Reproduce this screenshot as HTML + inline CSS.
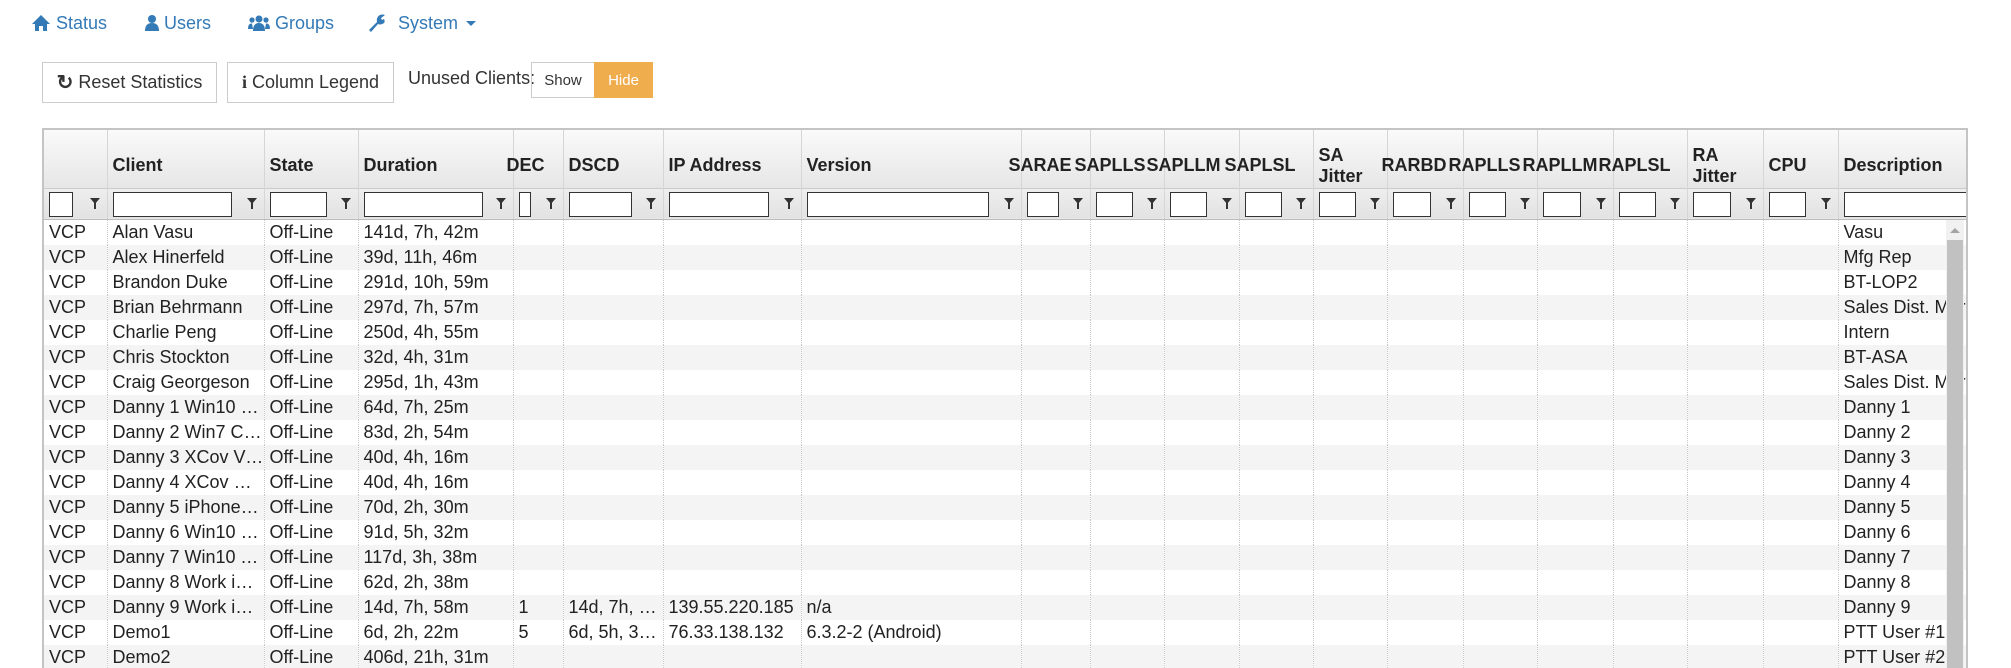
<!DOCTYPE html>
<html><head><meta charset="utf-8">
<style>
*{box-sizing:border-box;margin:0;padding:0}
html,body{width:2011px;height:668px;overflow:hidden}
body{background:#fff;font-family:"Liberation Sans",Arial,sans-serif;color:#222;position:relative}
.nav{position:absolute;top:11px;font-size:18px;color:#337ab7;display:flex;align-items:center;gap:5px;height:24px}
.btn{position:absolute;top:62px;height:41px;border:1px solid #ccc;background:#fff;font-size:18px;display:flex;align-items:center;justify-content:center;gap:5px;color:#333}
table{position:absolute;left:42px;top:128px;width:1924px;border-collapse:collapse;table-layout:fixed;border:2px solid #c4c4c4;border-bottom:none;font-size:18px}
th{height:59px;background:linear-gradient(#fafafa,#e6e6e6);border-left:1px solid #d6d6d6;text-align:left;vertical-align:bottom;padding:0 0 12px 5px;font-weight:bold;white-space:nowrap;overflow:visible;line-height:21px}
tr.f td{height:31px;background:linear-gradient(#eee,#e2e2e2);border-left:1px solid #d6d6d6;border-top:1px solid #ccc;border-bottom:1px solid #bbb;position:relative;padding:0}
tr.f td i{position:absolute;left:5px;top:3px;height:25px;background:#fff;border:1px solid #333}
tr.f td b{position:absolute;right:7px;top:9px;width:0;height:0;border-left:5px solid transparent;border-right:5px solid transparent;border-top:6px solid #333}
tr.f td b:after{content:"";position:absolute;left:-1px;top:-1px;width:2px;height:6px;background:#333}
td{height:25px;padding:0 0 0 5px;white-space:nowrap;overflow:hidden;text-overflow:ellipsis;border-left:1px dotted #c8c8c8;line-height:25px}
tbody tr:nth-child(even) td{background:#f4f4f4}
</style></head><body>
<div class="nav" style="left:31px"><svg width="20" height="18" viewBox="0 0 20 18"><path d="M10 1 L19 10 L16 10 L16 17 L12 17 L12 12 L8 12 L8 17 L4 17 L4 10 L1 10 Z" fill="#337ab7"/></svg>Status</div>
<div class="nav" style="left:145px"><svg width="14" height="18" viewBox="0 0 14 18"><circle cx="7" cy="5" r="4" fill="#337ab7"/><path d="M0 17 Q0 9 7 9 Q14 9 14 17Z" fill="#337ab7"/></svg>Users</div>
<div class="nav" style="left:248px"><svg width="22" height="18" viewBox="0 0 22 18"><circle cx="11" cy="5" r="3.5" fill="#337ab7"/><circle cx="4" cy="6" r="2.6" fill="#337ab7"/><circle cx="18" cy="6" r="2.6" fill="#337ab7"/><path d="M5 17 Q5 9 11 9 Q17 9 17 17Z M0 15 Q0 9 4 9.5 L5 15Z M22 15 Q22 9 18 9.5 L17 15Z" fill="#337ab7"/></svg>Groups</div>
<div class="nav" style="left:368px;gap:12px"><svg width="18" height="18" viewBox="0 0 18 18"><path d="M1 16 L9 8 Q8 3 12 1 Q15 0 17 1 L13 4 L14 6 L16 5 Q18 9 14 10 Q12 11 10 10 L3 18 Z" fill="#337ab7"/></svg>System<span style="display:inline-block;width:0;height:0;border-left:5px solid transparent;border-right:5px solid transparent;border-top:5px solid #337ab7;margin-left:-4px"></span></div>

<div class="btn" style="left:42px;width:175px"><span style="font-size:20px;font-weight:bold">&#x21bb;</span>Reset Statistics</div>
<div class="btn" style="left:227px;width:167px"><span style="font-family:'Liberation Serif',serif;font-weight:bold">i</span>Column Legend</div>
<div style="position:absolute;left:408px;top:68px;font-size:18px;color:#333">Unused Clients:</div>
<div style="position:absolute;left:531px;top:62px;width:64px;height:36px;border:1px solid #ccc;font-size:15px;display:flex;align-items:center;justify-content:center;color:#333">Show</div>
<div style="position:absolute;left:594px;top:62px;width:59px;height:36px;background:#f0ad4e;font-size:15px;display:flex;align-items:center;justify-content:center;color:#fff">Hide</div>

<table>
<colgroup><col style="width:64px"><col style="width:157px"><col style="width:94px"><col style="width:155px"><col style="width:50px"><col style="width:100px"><col style="width:138px"><col style="width:220px"><col style="width:69px"><col style="width:74px"><col style="width:75px"><col style="width:74px"><col style="width:74px"><col style="width:76px"><col style="width:74px"><col style="width:76px"><col style="width:74px"><col style="width:76px"><col style="width:75px"><col style="width:129px"></colgroup>
<thead><tr><th></th><th>Client</th><th>State</th><th>Duration</th><th><span style="position:relative;left:-12px">DEC</span></th><th>DSCD</th><th>IP Address</th><th>Version</th><th><span style="position:relative;left:-18px">SARAE</span></th><th><span style="position:relative;left:-21px">SAPLLS</span></th><th><span style="position:relative;left:-23px">SAPLLM</span></th><th><span style="position:relative;left:-20px">SAPLSL</span></th><th style="padding-bottom:1px">SA<br>Jitter</th><th><span style="position:relative;left:-11px">RARBD</span></th><th><span style="position:relative;left:-20px">RAPLLS</span></th><th><span style="position:relative;left:-20px">RAPLLM</span></th><th><span style="position:relative;left:-20px">RAPLSL</span></th><th style="padding-bottom:1px">RA<br>Jitter</th><th>CPU</th><th>Description</th></tr>
<tr class="f"><td><i style="width:24px"></i><b></b></td><td><i style="width:119px"></i><b></b></td><td><i style="width:57px"></i><b></b></td><td><i style="width:119px"></i><b></b></td><td><i style="width:12px"></i><b></b></td><td><i style="width:63px"></i><b></b></td><td><i style="width:100px"></i><b></b></td><td><i style="width:182px"></i><b></b></td><td><i style="width:32px"></i><b></b></td><td><i style="width:37px"></i><b></b></td><td><i style="width:37px"></i><b></b></td><td><i style="width:37px"></i><b></b></td><td><i style="width:37px"></i><b></b></td><td><i style="width:38px"></i><b></b></td><td><i style="width:37px"></i><b></b></td><td><i style="width:38px"></i><b></b></td><td><i style="width:37px"></i><b></b></td><td><i style="width:38px"></i><b></b></td><td><i style="width:37px"></i><b></b></td><td><i style="width:130px"></i></td></tr></thead>
<tbody>
<tr><td>VCP</td><td>Alan Vasu</td><td>Off-Line</td><td>141d, 7h, 42m</td><td></td><td></td><td></td><td></td><td></td><td></td><td></td><td></td><td></td><td></td><td></td><td></td><td></td><td></td><td></td><td>Vasu</td></tr>
<tr><td>VCP</td><td>Alex Hinerfeld</td><td>Off-Line</td><td>39d, 11h, 46m</td><td></td><td></td><td></td><td></td><td></td><td></td><td></td><td></td><td></td><td></td><td></td><td></td><td></td><td></td><td></td><td>Mfg Rep</td></tr>
<tr><td>VCP</td><td>Brandon Duke</td><td>Off-Line</td><td>291d, 10h, 59m</td><td></td><td></td><td></td><td></td><td></td><td></td><td></td><td></td><td></td><td></td><td></td><td></td><td></td><td></td><td></td><td>BT-LOP2</td></tr>
<tr><td>VCP</td><td>Brian Behrmann</td><td>Off-Line</td><td>297d, 7h, 57m</td><td></td><td></td><td></td><td></td><td></td><td></td><td></td><td></td><td></td><td></td><td></td><td></td><td></td><td></td><td></td><td>Sales Dist. Mgr</td></tr>
<tr><td>VCP</td><td>Charlie Peng</td><td>Off-Line</td><td>250d, 4h, 55m</td><td></td><td></td><td></td><td></td><td></td><td></td><td></td><td></td><td></td><td></td><td></td><td></td><td></td><td></td><td></td><td>Intern</td></tr>
<tr><td>VCP</td><td>Chris Stockton</td><td>Off-Line</td><td>32d, 4h, 31m</td><td></td><td></td><td></td><td></td><td></td><td></td><td></td><td></td><td></td><td></td><td></td><td></td><td></td><td></td><td></td><td>BT-ASA</td></tr>
<tr><td>VCP</td><td>Craig Georgeson</td><td>Off-Line</td><td>295d, 1h, 43m</td><td></td><td></td><td></td><td></td><td></td><td></td><td></td><td></td><td></td><td></td><td></td><td></td><td></td><td></td><td></td><td>Sales Dist. Mgr</td></tr>
<tr><td>VCP</td><td>Danny 1 Win10 Laptop</td><td>Off-Line</td><td>64d, 7h, 25m</td><td></td><td></td><td></td><td></td><td></td><td></td><td></td><td></td><td></td><td></td><td></td><td></td><td></td><td></td><td></td><td>Danny 1</td></tr>
<tr><td>VCP</td><td>Danny 2 Win7 Client</td><td>Off-Line</td><td>83d, 2h, 54m</td><td></td><td></td><td></td><td></td><td></td><td></td><td></td><td></td><td></td><td></td><td></td><td></td><td></td><td></td><td></td><td>Danny 2</td></tr>
<tr><td>VCP</td><td>Danny 3 XCov Virtual</td><td>Off-Line</td><td>40d, 4h, 16m</td><td></td><td></td><td></td><td></td><td></td><td></td><td></td><td></td><td></td><td></td><td></td><td></td><td></td><td></td><td></td><td>Danny 3</td></tr>
<tr><td>VCP</td><td>Danny 4 XCov Client</td><td>Off-Line</td><td>40d, 4h, 16m</td><td></td><td></td><td></td><td></td><td></td><td></td><td></td><td></td><td></td><td></td><td></td><td></td><td></td><td></td><td></td><td>Danny 4</td></tr>
<tr><td>VCP</td><td>Danny 5 iPhone 6s Plus</td><td>Off-Line</td><td>70d, 2h, 30m</td><td></td><td></td><td></td><td></td><td></td><td></td><td></td><td></td><td></td><td></td><td></td><td></td><td></td><td></td><td></td><td>Danny 5</td></tr>
<tr><td>VCP</td><td>Danny 6 Win10 Desktop</td><td>Off-Line</td><td>91d, 5h, 32m</td><td></td><td></td><td></td><td></td><td></td><td></td><td></td><td></td><td></td><td></td><td></td><td></td><td></td><td></td><td></td><td>Danny 6</td></tr>
<tr><td>VCP</td><td>Danny 7 Win10 Tablet</td><td>Off-Line</td><td>117d, 3h, 38m</td><td></td><td></td><td></td><td></td><td></td><td></td><td></td><td></td><td></td><td></td><td></td><td></td><td></td><td></td><td></td><td>Danny 7</td></tr>
<tr><td>VCP</td><td>Danny 8 Work iPhone</td><td>Off-Line</td><td>62d, 2h, 38m</td><td></td><td></td><td></td><td></td><td></td><td></td><td></td><td></td><td></td><td></td><td></td><td></td><td></td><td></td><td></td><td>Danny 8</td></tr>
<tr><td>VCP</td><td>Danny 9 Work iPad</td><td>Off-Line</td><td>14d, 7h, 58m</td><td>1</td><td>14d, 7h, 58m</td><td>139.55.220.185</td><td>n/a</td><td></td><td></td><td></td><td></td><td></td><td></td><td></td><td></td><td></td><td></td><td></td><td>Danny 9</td></tr>
<tr><td>VCP</td><td>Demo1</td><td>Off-Line</td><td>6d, 2h, 22m</td><td>5</td><td>6d, 5h, 30m</td><td>76.33.138.132</td><td>6.3.2-2 (Android)</td><td></td><td></td><td></td><td></td><td></td><td></td><td></td><td></td><td></td><td></td><td></td><td>PTT User #19</td></tr>
<tr><td>VCP</td><td>Demo2</td><td>Off-Line</td><td>406d, 21h, 31m</td><td></td><td></td><td></td><td></td><td></td><td></td><td></td><td></td><td></td><td></td><td></td><td></td><td></td><td></td><td></td><td>PTT User #20</td></tr>
</tbody></table>
<div style="position:absolute;left:1946px;top:220px;width:18px;height:448px;background:#f1f1f1"></div>
<div style="position:absolute;left:1947px;top:240px;width:16px;height:428px;background:#c1c1c1"></div>
<div style="position:absolute;left:1950px;top:228px;width:0;height:0;border-left:5px solid transparent;border-right:5px solid transparent;border-bottom:5px solid #a3a3a3"></div>
</body></html>
